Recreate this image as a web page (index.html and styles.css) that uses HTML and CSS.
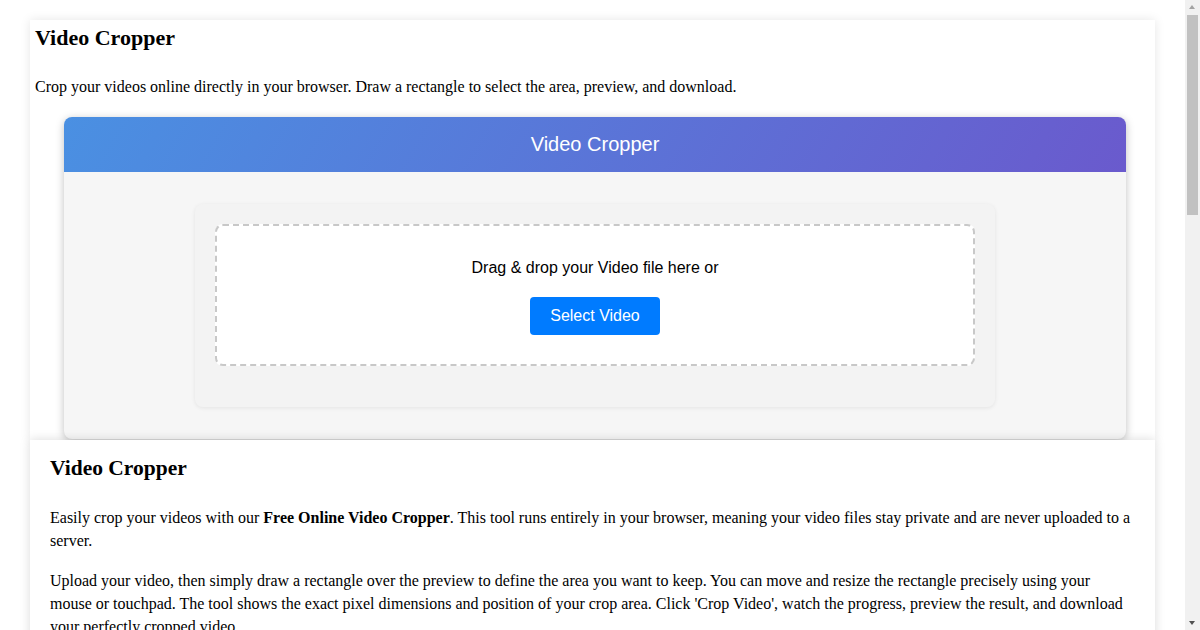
FILE: index.html
```html
<!DOCTYPE html>
<html lang="en">
<head>
    <meta charset="UTF-8">
    <meta name="viewport" content="width=device-width, initial-scale=1.0">
    <title>Video Cropper</title>
    <link rel="stylesheet" href="styles.css">
</head>
<body>
    <div class="page-box">
        <h1 class="page-title">Video Cropper</h1>
        <p class="page-intro">Crop your videos online directly in your browser. Draw a rectangle to select the area, preview, and download.</p>

        <div class="tool-card">
            <div class="tool-header">Video Cropper</div>
            <div class="tool-body">
                <div class="upload-panel">
                    <div class="drop-zone">
                        <p class="drop-text">Drag &amp; drop your Video file here or</p>
                        <button class="btn-select">Select Video</button>
                    </div>
                </div>
            </div>
        </div>
    </div>

    <div class="info-box">
        <h2>Video Cropper</h2>
        <p>Easily crop your videos with our <strong>Free Online Video Cropper</strong>. This tool runs entirely in your browser, meaning your video files stay private and are never uploaded to a server.</p>
        <p>Upload your video, then simply draw a rectangle over the preview to define the area you want to keep. You can move and resize the rectangle precisely using your mouse or touchpad. The tool shows the exact pixel dimensions and position of your crop area. Click 'Crop Video', watch the progress, preview the result, and download your perfectly cropped video.</p>

        <h3>How to Crop a Video</h3>
        <ol>
            <li>Click "Select Video" or drag and drop a video file into the upload area.</li>
            <li>Draw a rectangle over the video preview to choose the area you want to keep.</li>
            <li>Move or resize the rectangle until the crop area is exactly right.</li>
            <li>Click "Crop Video" and wait for the progress bar to finish.</li>
            <li>Preview the cropped video and click "Download" to save it.</li>
        </ol>

        <h3>Features</h3>
        <ul>
            <li><strong>Private:</strong> all processing happens locally in your browser.</li>
            <li><strong>Precise:</strong> see the exact pixel size and position of the crop area.</li>
            <li><strong>Free:</strong> no sign-up, no watermark and no limits.</li>
            <li><strong>Works everywhere:</strong> use it on Windows, macOS, Linux and Chromebooks.</li>
        </ul>

        <h3>Frequently Asked Questions</h3>
        <p><strong>Are my videos uploaded to a server?</strong><br>No. The video never leaves your computer, everything is done in the browser.</p>
        <p><strong>Which formats are supported?</strong><br>Most common formats such as MP4, WebM, MOV and MKV can be opened, as long as your browser can play them.</p>
        <p><strong>Will cropping reduce the quality?</strong><br>The cropped area is re-encoded at a high quality setting, so the result looks as close to the original as possible.</p>
        <p><strong>Is there a file size limit?</strong><br>There is no fixed limit, but very large files may take longer to process depending on your device.</p>
        <p><strong>Can I use it on my phone?</strong><br>Yes, the crop rectangle can be drawn and moved with touch as well as with a mouse.</p>
    </div>

    <!-- window scrollbar as seen in the screenshot -->
    <div class="scrollbar">
        <span class="arrow arrow-up"></span>
        <span class="thumb"></span>
        <span class="arrow arrow-down"></span>
    </div>
</body>
</html>
```

FILE: styles.css
```css
/* Global */
html, body {
    padding: 0;
    background: #fff;
    color: #000;
    font-family: 'Liberation Serif', 'Times New Roman', serif;
}

html {
    margin: 0;
}

body {
    margin: 0 15px 0 0;
}

/* Top box */
.page-box {
    max-width: 1115px;
    margin: 20px auto 0;
    padding: 4px 5px 1px;
    background: #fff;
    box-shadow: 0 0 10px rgba(0, 0, 0, 0.1);
}

.page-title {
    margin: 0 0 25px;
    font-size: 22px;
    line-height: 28px;
}

.page-intro {
    margin: 0 0 21px;
    font-size: 16px;
    line-height: 19px;
}

/* Tool card */
.tool-card {
    width: 1062px;
    margin-left: 29px;
    border-radius: 8px;
    overflow: hidden;
    background: #f6f6f6;
    box-shadow: 0 2px 8px rgba(0, 0, 0, 0.25);
}

.tool-header {
    height: 55px;
    line-height: 55px;
    text-align: center;
    color: #fff;
    font-family: 'Liberation Sans', Arial, sans-serif;
    font-size: 20px;
    background: linear-gradient(120deg, #4a90e2, #6a5acd);
}

.tool-body {
    padding: 32px 0;
}

.upload-panel {
    width: 760px;
    margin: 0 auto;
    padding: 20px 20px 41px;
    background: #f3f3f3;
    border-radius: 8px;
    box-shadow: 0 1px 4px rgba(0, 0, 0, 0.08);
}

.drop-zone {
    height: 138px;
    border: 2px dashed #c8c8c8;
    border-radius: 8px;
    background: #fff;
    display: flex;
    flex-direction: column;
    align-items: center;
    font-family: 'Liberation Sans', Arial, sans-serif;
}

.drop-text {
    margin: 33px 0 20px;
    font-size: 16px;
    line-height: 18px;
}

.btn-select {
    width: 130px;
    height: 38px;
    border: none;
    border-radius: 4px;
    background: #007bff;
    color: #fff;
    font-family: 'Liberation Sans', Arial, sans-serif;
    font-size: 16px;
    cursor: pointer;
}

/* Info box */
.info-box {
    max-width: 1085px;
    margin: 0 auto 20px;
    padding: 14px 20px 20px;
    background: #fff;
    box-shadow: 0 0 10px rgba(0, 0, 0, 0.15);
    font-size: 16px;
    line-height: 23px;
}

.info-box h2 {
    margin: 0 0 24px;
    font-size: 21.5px;
    line-height: 28px;
}

.info-box p {
    margin: 0 0 17px;
}

.info-box h3 {
    margin: 24px 0 12px;
    font-size: 19px;
}

.info-box li {
    margin-bottom: 6px;
}

/* Fake window scrollbar */
.scrollbar {
    position: fixed;
    top: 0;
    right: 0;
    width: 15px;
    height: 100%;
    background: #f1f1f1;
}

.thumb {
    position: absolute;
    top: 15px;
    left: 2px;
    width: 11px;
    height: 200px;
    background: #c1c1c1;
}

.arrow {
    position: absolute;
    left: 4px;
    width: 0;
    height: 0;
    border-left: 3.5px solid transparent;
    border-right: 3.5px solid transparent;
}

.arrow-up {
    top: 5px;
    border-bottom: 4px solid #a3a3a3;
}

.arrow-down {
    bottom: 5px;
    border-top: 4px solid #505050;
}
```
